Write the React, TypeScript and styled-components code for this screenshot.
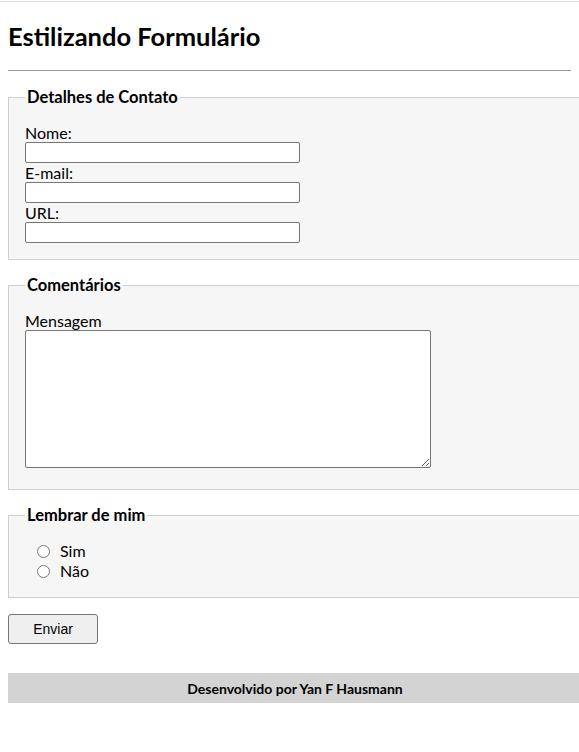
import styled, { createGlobalStyle } from "styled-components";

const GlobalStyle = createGlobalStyle`
    html, body {
        margin: 0;
        background: #fff;
    }
    body {
        font-family: Lato, "Liberation Sans", sans-serif;
        color: #000;
        overflow-x: hidden;
    }
`

const Page = styled.div`
    border-top: 1px solid #dedede;
    margin-top: 1px;
    padding: 0 8px 30px;
`

const Title = styled.h1`
    font-size: 25.5px;
    font-weight: 700;
    margin: 0;
    padding: 19px 0 19px;
    line-height: 30px;
    border-bottom: 1px solid #999;
`

const Form = styled.form`
    width: 590px;
    padding-top: 17px;
`

const Fieldset = styled.fieldset`
    margin: 0 0 16px;
    padding: 17px 16px 16px;
    border: 1px solid #cfcfcf;
    background: #f6f6f6;
`

const Legend = styled.legend`
    font-weight: 700;
    font-size: 16.5px;
    padding: 0 2px;
    line-height: 18px;
`

const Label = styled.label`
    display: block;
    font-size: 16px;
    line-height: 19px;
`

const TextInput = styled.input`
    display: block;
    box-sizing: border-box;
    width: 275px;
    height: 21px;
    margin: 0;
    border: 1px solid #767676;
    border-radius: 2px;
    background: #fff;
`

const TextArea = styled.textarea`
    display: block;
    box-sizing: border-box;
    width: 406px;
    height: 138px;
    margin: 0 0 5px;
    border: 1px solid #767676;
    border-radius: 2px;
    background: #fff;
`

const RadioList = styled.div`
    padding: 0 0 0 10px;
`

const RadioRow = styled.label`
    display: flex;
    align-items: center;
    gap: 10px;
    font-size: 16px;
    line-height: 20px;
`

const Radio = styled.input`
    margin: 0 0 0 2px;
    width: 13px;
    height: 13px;
`

const Submit = styled.button`
    display: block;
    width: 90px;
    height: 30px;
    font-family: "Liberation Sans", Arial, sans-serif;
    font-size: 14px;
    background: #efefef;
    border: 1px solid #767676;
    border-radius: 3px;
    color: #000;
`

const Footer = styled.footer`
    margin-top: 29px;
    width: 574px;
    height: 30px;
    background: #d3d3d3;
    display: flex;
    align-items: center;
    justify-content: center;
    font-size: 14px;
    font-weight: 700;
`

export default function App() {
    return (
        <Page>
            <GlobalStyle />
            <Title>Estilizando Formulário</Title>
            <Form onSubmit={(e) => e.preventDefault()}>
                <Fieldset>
                    <Legend>Detalhes de Contato</Legend>
                    <Label htmlFor="nome">Nome:</Label>
                    <TextInput id="nome" type="text" />
                    <Label htmlFor="email">E-mail:</Label>
                    <TextInput id="email" type="email" />
                    <Label htmlFor="url">URL:</Label>
                    <TextInput id="url" type="url" />
                </Fieldset>
                <Fieldset>
                    <Legend>Comentários</Legend>
                    <Label htmlFor="msg">Mensagem</Label>
                    <TextArea id="msg" />
                </Fieldset>
                <Fieldset>
                    <Legend>Lembrar de mim</Legend>
                    <RadioList>
                        <RadioRow><Radio type="radio" name="lembrar" /> Sim</RadioRow>
                        <RadioRow><Radio type="radio" name="lembrar" /> Não</RadioRow>
                    </RadioList>
                </Fieldset>
                <Submit type="submit">Enviar</Submit>
            </Form>
            <Footer>Desenvolvido por Yan F Hausmann</Footer>
        </Page>
    )
}
